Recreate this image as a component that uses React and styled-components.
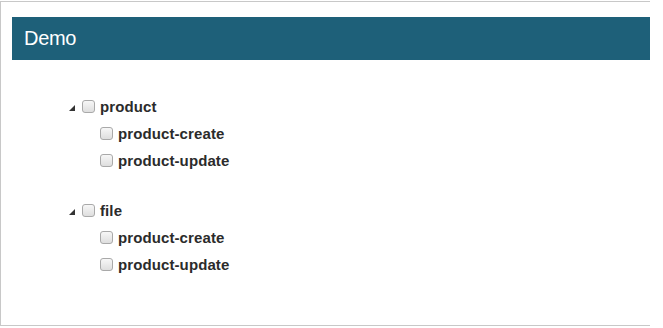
import React from "react"
import styled, { createGlobalStyle } from "styled-components"

const GlobalStyle = createGlobalStyle`
  html, body {
    margin: 0;
    padding: 0;
    background: #fff;
    font-family: "Liberation Sans", Arial, sans-serif;
  }
`

const Panel = styled.div`
  margin-top: 1px;
  width: 650px;
  height: 325px;
  box-sizing: border-box;
  border: 1px solid #c8c8c8;
  border-right: none;
  padding: 15px 0 0 11px;
`

const Header = styled.div`
  height: 43px;
  background: #1e6079;
  color: #fff;
  font-size: 20px;
  display: flex;
  align-items: center;
  padding-left: 12px;
  letter-spacing: -0.3px;
`

const Tree = styled.div`
  margin-top: 33px;
  padding-left: 57px;
  display: flex;
  flex-direction: column;
  gap: 23px;
`

const Group = styled.div`
  display: flex;
  flex-direction: column;
`

const Row = styled.div`
  height: 27px;
  display: flex;
  align-items: center;
  padding-left: ${p => (p.$child ? "31px" : "0")};
  color: #2b2b2b;
  font-size: 15px;
  font-weight: bold;
  letter-spacing: 0.1px;
`

const Toggle = styled.span`
  width: 13px;
  height: 13px;
  display: flex;
  align-items: center;
  padding-top: 2px;
  box-sizing: border-box;
`

const Check = styled.span`
  width: 13px;
  height: 13px;
  box-sizing: border-box;
  border: 1px solid #a9a9a9;
  border-radius: 3px;
  background: linear-gradient(#f7f7f7, #dedede);
  flex: none;
`

const Label = styled.span`
  margin-left: 5px;
`

const Triangle = () => (
  <svg width="6" height="6" viewBox="0 0 6 6">
    <polygon points="6,0 6,6 0,6" fill="#333" />
  </svg>
)

const groups = [
  { name: "product", items: ["product-create", "product-update"] },
  { name: "file", items: ["product-create", "product-update"] },
]

const App = () => {
  return (
    <>
      <GlobalStyle />
      <Panel>
        <Header>Demo</Header>
        <Tree>
          {groups.map(g => (
            <Group key={g.name}>
              <Row>
                <Toggle><Triangle /></Toggle>
                <Check />
                <Label>{g.name}</Label>
              </Row>
              {g.items.map(item => (
                <Row $child key={item}>
                  <Check />
                  <Label>{item}</Label>
                </Row>
              ))}
            </Group>
          ))}
        </Tree>
      </Panel>
    </>
  )
}

export default App
